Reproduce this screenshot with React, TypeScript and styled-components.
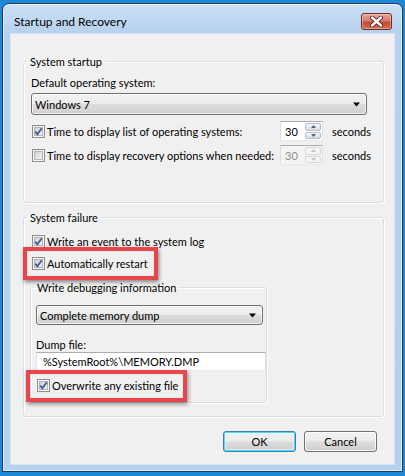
import React from "react";
import styled, { createGlobalStyle } from "styled-components";

const GlobalStyle = createGlobalStyle`
  html, body {
    margin: 0;
    padding: 0;
  }
  body {
    background: #1b88d8;
    font-family: Lato, "Liberation Sans", Arial, sans-serif;
    font-size: 11px;
    color: #000;
  }
`;

const Window = styled.div`
  box-sizing: border-box;
  margin: 3px 0 0 2px;
  width: 401px;
  height: 469px;
  border: 1px solid #26384d;
  border-radius: 7px 7px 0 0;
  background: linear-gradient(to bottom, #cbe0f5 0px, #b7d2ef 28px, #b5d1ef 100%);
  box-shadow: inset 0 0 0 1px rgba(255, 255, 255, 0.6);
  display: flex;
  flex-direction: column;
  padding: 0 7px 6px 7px;
`;

const TitleBar = styled.div`
  height: 29px;
  box-sizing: border-box;
  padding: 5px 3px 0 4px;
  display: flex;
  align-items: center;
  justify-content: space-between;
`;

const Title = styled.span`
  font-size: 12px;
  color: #000;
`;

const CloseButton = styled.button`
  width: 31px;
  height: 17px;
  padding: 0;
  border: 1px solid #6d2a22;
  border-radius: 3px;
  background: linear-gradient(to bottom, #e8a595 0%, #d77b6b 45%, #c44a36 55%, #d0704f 100%);
  box-shadow: inset 0 0 0 1px rgba(255, 255, 255, 0.35);
  display: flex;
  align-items: center;
  justify-content: center;
`;

const Client = styled.div`
  flex: 1;
  background: #f0f0f0;
  border: 1px solid #d6e4f2;
  padding: 20px 10px 0 12px;
  display: flex;
  flex-direction: column;
`;

const Group = styled.fieldset<{ $pad: string; $mt?: number }>`
  margin: ${(p) => p.$mt ?? 0}px 0 0 0;
  min-width: 0;
  border: 1px solid #d5dfe5;
  border-radius: 3px;
  box-shadow: inset 1px 1px 0 #fff, 1px 1px 0 #fff;
  padding: ${(p) => p.$pad};
  display: flex;
  flex-direction: column;
  align-items: flex-start;
`;

const Legend = styled.legend<{ $ml: number }>`
  padding: 0 3px;
  margin-left: ${(p) => p.$ml}px;
  line-height: 15px;
`;

const Label = styled.div<{ $mt?: number }>`
  line-height: 15px;
  margin-top: ${(p) => p.$mt ?? 0}px;
`;

const Combo = styled.div<{ $w: number; $h: number; $mt: number }>`
  box-sizing: border-box;
  width: ${(p) => p.$w}px;
  height: ${(p) => p.$h}px;
  margin-top: ${(p) => p.$mt}px;
  border: 1px solid #707070;
  border-radius: 3px;
  background: linear-gradient(to bottom, #f2f2f2 0%, #ebebeb 49%, #dddddd 51%, #cfcfcf 100%);
  box-shadow: inset 0 0 0 1px rgba(255, 255, 255, 0.7);
  display: flex;
  align-items: center;
  justify-content: space-between;
  padding: 0 5px 0 3px;
`;

const SpinGrid = styled.div<{ $mt: number }>`
  display: grid;
  grid-template-columns: 239px 43px auto;
  column-gap: 9px;
  align-items: center;
  margin-top: ${(p) => p.$mt}px;
  padding-left: 1px;
`;

const CheckRow = styled.label<{ $ml?: number }>`
  display: flex;
  align-items: center;
  gap: 2px;
  line-height: 15px;
  margin-left: ${(p) => p.$ml ?? 0}px;
  white-space: nowrap;

  svg {
    flex-shrink: 0;
  }
`;

const Spinner = styled.div<{ $disabled?: boolean }>`
  box-sizing: border-box;
  height: 20px;
  border: 1px solid #abadb3;
  border-color: #abadb3 #e2e3ea #e3e9ef #dbdfe6;
  background: ${(p) => (p.$disabled ? "#f4f4f4" : "#fff")};
  color: ${(p) => (p.$disabled ? "#8d8d8d" : "#000")};
  display: flex;
  align-items: stretch;
  justify-content: space-between;
`;

const SpinValue = styled.span`
  padding-left: 4px;
  display: flex;
  align-items: center;
`;

const SpinButtons = styled.div`
  width: 16px;
  display: flex;
  flex-direction: column;
  gap: 1px;
  padding: 1px 1px 1px 0;
`;

const SpinArrow = styled.div<{ $disabled?: boolean }>`
  flex: 1;
  border: 1px solid ${(p) => (p.$disabled ? "#d9d9d9" : "#b5bcc6")};
  border-radius: 2px;
  background: ${(p) =>
    p.$disabled
      ? "#f4f4f4"
      : "linear-gradient(to bottom, #f7f8fa 0%, #e4e8ee 50%, #d7dde6 100%)"};
  display: flex;
  align-items: center;
  justify-content: center;
`;

const Seconds = styled.span`
  line-height: 15px;
`;

const TextBox = styled.div<{ $w: number }>`
  box-sizing: border-box;
  width: ${(p) => p.$w}px;
  height: 19px;
  border: 1px solid #abadb3;
  border-color: #abadb3 #dbdfe6 #e3e9ef #e2e3ea;
  background: #fff;
  padding-left: 6px;
  display: flex;
  align-items: center;
`;

const Highlight = styled.div<{ $inset: string; $mt: number }>`
  position: relative;
  width: fit-content;
  margin-top: ${(p) => p.$mt}px;

  &::after {
    content: "";
    position: absolute;
    inset: ${(p) => p.$inset};
    border: 4px solid #e5474c;
    box-shadow: 1px 2px 4px rgba(0, 0, 0, 0.45), inset 0 0 1px rgba(120, 0, 0, 0.4);
    pointer-events: none;
  }
`;

const ButtonRow = styled.div`
  display: flex;
  justify-content: flex-end;
  gap: 8px;
  margin-top: 14px;
  padding-right: 7px;
`;

const Button = styled.button<{ $default?: boolean }>`
  width: 73px;
  height: 21px;
  padding: 0;
  font: inherit;
  color: #000;
  border: 1px solid ${(p) => (p.$default ? "#3c7fb1" : "#707070")};
  border-radius: 3px;
  background: linear-gradient(to bottom, #f2f2f2 0%, #ebebeb 49%, #dddddd 51%, #cfcfcf 100%);
  box-shadow: ${(p) =>
    p.$default
      ? "inset 0 0 0 1px #48d8fb, inset 0 0 0 2px rgba(255,255,255,0.5)"
      : "inset 0 0 0 1px rgba(255,255,255,0.8)"};
`;

const CheckBox = ({ checked }: { checked?: boolean }) => (
  <svg width="13" height="13" viewBox="0 0 13 13">
    <defs>
      <linearGradient id="cbFill" x1="0" y1="0" x2="1" y2="1">
        <stop offset="0" stopColor="#cbcfd5" />
        <stop offset="1" stopColor="#f7f7f7" />
      </linearGradient>
    </defs>
    <rect x="0.5" y="0.5" width="12" height="12" fill="#f4f4f4" stroke="#8e8f8f" />
    <rect x="2.5" y="2.5" width="8" height="8" fill="url(#cbFill)" stroke="#b2b6bc" />
    {checked && (
      <path d="M3.2 6.6 L5.4 9.2 L9.8 3.2" stroke="#4a5c94" strokeWidth="1.9" fill="none" />
    )}
  </svg>
);

const DownArrow = () => (
  <svg width="8" height="5" viewBox="0 0 8 5">
    <path d="M0 0.5 H7 L3.5 4.5 Z" fill="#000" />
  </svg>
);

const SpinTri = ({ up, disabled }: { up?: boolean; disabled?: boolean }) => (
  <svg width="5" height="3" viewBox="0 0 5 3">
    <path d={up ? "M0 3 H5 L2.5 0 Z" : "M0 0 H5 L2.5 3 Z"} fill={disabled ? "#c4c4c4" : "#4d6185"} />
  </svg>
);

const SpinRow = ({
  checked,
  text,
  disabled,
  mt,
}: {
  checked?: boolean;
  text: string;
  disabled?: boolean;
  mt: number;
}) => (
  <SpinGrid $mt={mt}>
    <CheckRow>
      <CheckBox checked={checked} />
      <span>{text}</span>
    </CheckRow>
    <Spinner $disabled={disabled}>
      <SpinValue>30</SpinValue>
      <SpinButtons>
        <SpinArrow $disabled={disabled}>
          <SpinTri up disabled={disabled} />
        </SpinArrow>
        <SpinArrow $disabled={disabled}>
          <SpinTri disabled={disabled} />
        </SpinArrow>
      </SpinButtons>
    </Spinner>
    <Seconds>seconds</Seconds>
  </SpinGrid>
);

const App = () => {
  return (
    <>
      <GlobalStyle />
      <Window>
        <TitleBar>
          <Title>Startup and Recovery</Title>
          <CloseButton aria-label="Close">
            <svg width="13" height="11" viewBox="0 0 13 11">
              <path
                d="M2 1.5 L11 9.5 M11 1.5 L2 9.5"
                stroke="#3a1a16"
                strokeWidth="4"
                strokeLinecap="round"
              />
              <path
                d="M2 1.5 L11 9.5 M11 1.5 L2 9.5"
                stroke="#fff"
                strokeWidth="2.4"
                strokeLinecap="round"
              />
            </svg>
          </CloseButton>
        </TitleBar>
        <Client>
          <Group $pad="6px 16px 37px 7px">
            <Legend $ml={-4}>System startup</Legend>
            <Label>Default operating system:</Label>
            <Combo $w={336} $h={22} $mt={3}>
              <span>Windows 7</span>
              <DownArrow />
            </Combo>
            <SpinRow checked text="Time to display list of operating systems:" mt={6} />
            <SpinRow text="Time to display recovery options when needed:" disabled mt={4} />
          </Group>

          <Group $pad="9px 13px 13px 6px" $mt={7}>
            <Legend $ml={-3}>System failure</Legend>
            <CheckRow $ml={2}>
              <CheckBox checked />
              <span>Write an event to the system log</span>
            </CheckRow>
            <Highlight $inset="-9px -10px -9px -7px" $mt={7}>
              <CheckRow $ml={2}>
                <CheckBox checked />
                <span>Automatically restart</span>
              </CheckRow>
            </Highlight>

            <Group $pad="10px 0 9px 5px" $mt={9}>
              <Legend $ml={-2}>Write debugging information</Legend>
              <Combo $w={227} $h={20} $mt={0}>
                <span>Complete memory dump</span>
                <DownArrow />
              </Combo>
              <Label $mt={12}>Dump file:</Label>
              <TextBox $w={230}>%SystemRoot%\MEMORY.DMP</TextBox>
              <Highlight $inset="-8px -9px -9px -10px" $mt={7}>
                <CheckRow $ml={1}>
                  <CheckBox checked />
                  <span>Overwrite any existing file</span>
                </CheckRow>
              </Highlight>
            </Group>
          </Group>

          <ButtonRow>
            <Button $default>OK</Button>
            <Button>Cancel</Button>
          </ButtonRow>
        </Client>
      </Window>
    </>
  );
};

export default App;
